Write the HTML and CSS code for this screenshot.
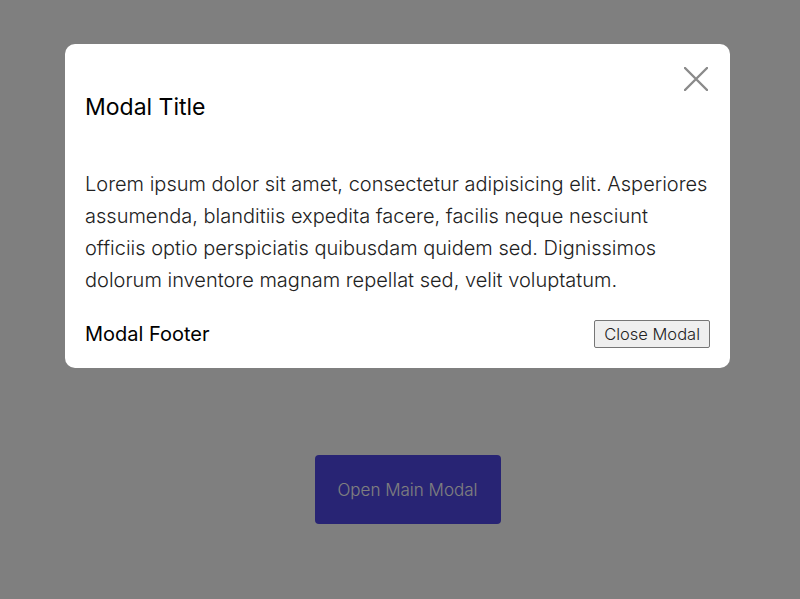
FILE: index.html
```html
<!DOCTYPE html>
<html lang="en">
<head>
    <meta charset="UTF-8">
    <meta name="viewport" content="width=device-width, initial-scale=1.0">
    <title>Modal</title>
    <link rel="stylesheet" href="styles.css">
</head>
<body>

<div class="page">
    <button class="open-button">Open Main Modal</button>
</div>

<div class="overlay">
    <div class="modal">
        <button class="close-icon" aria-label="Close">
            <svg width="24" height="24" viewBox="0 0 24 24">
                <path d="M1 1 L23 23 M23 1 L1 23" stroke="#8a8a8a" stroke-width="2.4" stroke-linecap="round" fill="none"/>
            </svg>
        </button>
        <h2 class="modal-title">Modal Title</h2>
        <p class="modal-body">Lorem ipsum dolor sit amet, consectetur adipisicing elit. Asperiores assumenda, blanditiis expedita facere, facilis neque nesciunt officiis optio perspiciatis quibusdam quidem sed. Dignissimos dolorum inventore magnam repellat sed, velit voluptatum.</p>
        <div class="modal-footer">
            <span>Modal Footer</span>
            <button class="close-button">Close Modal</button>
        </div>
    </div>
</div>

</body>
</html>
```

FILE: styles.css
```css
body {
    margin: 0;
    font-family: Inter, 'Noto Sans', sans-serif;
    background: #ffffff;
    height: 100vh;
    overflow: hidden;
}

.page {
    display: flex;
    justify-content: center;
    padding: 455px 0 0 15px;
}

.open-button {
    width: 186px;
    height: 69px;
    background: #5048e8;
    color: #ffffff;
    border: none;
    border-radius: 4px;
    font-family: inherit;
    font-size: 17px;
    font-weight: 300;
    cursor: pointer;
}

.overlay {
    position: fixed;
    inset: 0;
    background: rgba(0, 0, 0, 0.5);
}

.modal {
    position: relative;
    width: 625px;
    margin: 44px 0 0 65px;
    padding: 20px;
    background: #ffffff;
    border-radius: 10px;
}

.close-icon {
    position: absolute;
    top: 23px;
    right: 22px;
    width: 24px;
    height: 24px;
    padding: 0;
    border: none;
    background: none;
    cursor: pointer;
}

.close-icon svg {
    display: block;
}

.modal-title {
    margin: 29px 0 0;
    font-size: 23px;
    line-height: 28px;
    font-weight: 400;
    color: #000000;
}

.modal-body {
    margin: 47px 0 0;
    font-size: 20px;
    line-height: 32px;
    font-weight: 300;
    color: #222222;
}

.modal-footer {
    display: flex;
    justify-content: space-between;
    align-items: center;
    margin-top: 24px;
    font-size: 20px;
    line-height: 24px;
    color: #000000;
}

.close-button {
    font-family: inherit;
    font-size: 16.5px;
    font-weight: 300;
    color: #222222;
    background: #efefef;
    border: 1px solid #767676;
    border-radius: 2px;
    padding: 3px 9px;
    cursor: pointer;
}
```
